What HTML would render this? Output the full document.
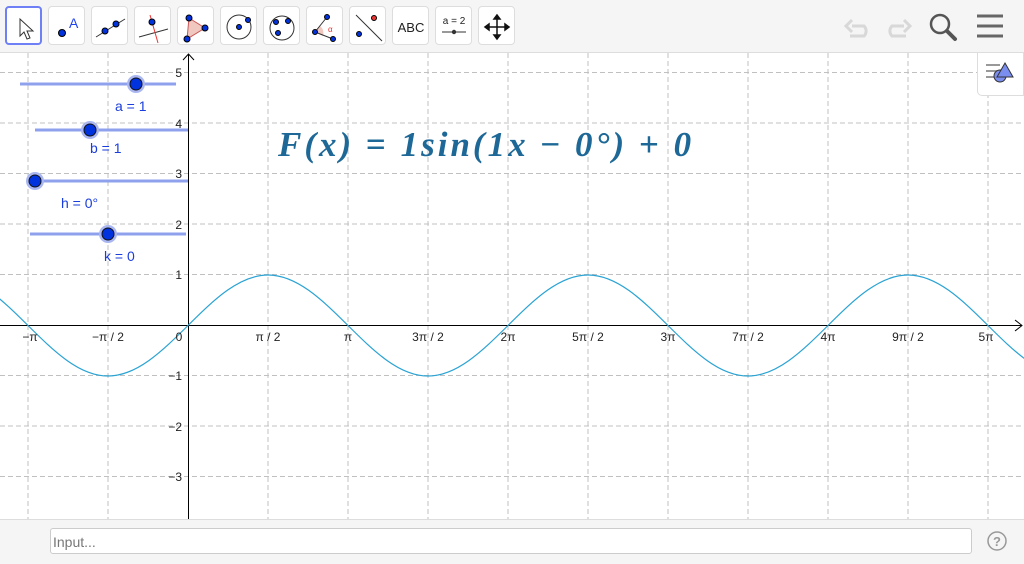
<!DOCTYPE html>
<html><head><meta charset="utf-8"><style>
*{margin:0;padding:0;box-sizing:border-box}
body{width:1024px;height:564px;overflow:hidden;background:#fff;font-family:"Liberation Sans",sans-serif;position:relative}
#tb{position:absolute;left:0;top:0;width:1024px;height:53px;background:#f5f5f5;border-bottom:1px solid #ddd}
.btn{position:absolute;top:6px;width:37px;height:39px;background:#fff;border:1px solid #ddd;border-radius:4px}
.btn svg{position:absolute;left:0;top:0}
#bot{position:absolute;left:0;top:519px;width:1024px;height:45px;background:#f5f5f5;border-top:1px solid #ddd}
#inp{position:absolute;left:50px;top:8px;width:922px;height:26px;background:#fff;border:1px solid #ccc;border-radius:3px;font-size:14px;color:#777;padding:5px 2px}
.lbl{position:absolute;font-size:14px;color:#1a3ddd}
#f{position:absolute;left:278px;top:125px;font-family:"Liberation Serif",serif;font-weight:bold;font-style:italic;font-size:35px;letter-spacing:3px;color:#1d6896;white-space:nowrap}
#f span{font-style:normal}
</style></head><body>
<svg width="1024" height="564" style="position:absolute;left:0;top:0">
<g stroke="#c0c0c0" stroke-dasharray="5,3" stroke-width="1">
<line x1="28" y1="53" x2="28" y2="519"/><line x1="108" y1="53" x2="108" y2="519"/><line x1="268" y1="53" x2="268" y2="519"/><line x1="348" y1="53" x2="348" y2="519"/><line x1="428" y1="53" x2="428" y2="519"/><line x1="508" y1="53" x2="508" y2="519"/><line x1="588" y1="53" x2="588" y2="519"/><line x1="668" y1="53" x2="668" y2="519"/><line x1="748" y1="53" x2="748" y2="519"/><line x1="828" y1="53" x2="828" y2="519"/><line x1="908" y1="53" x2="908" y2="519"/><line x1="988" y1="53" x2="988" y2="519"/>
<line x1="0" y1="72.5" x2="1024" y2="72.5"/><line x1="0" y1="123" x2="1024" y2="123"/><line x1="0" y1="173.5" x2="1024" y2="173.5"/><line x1="0" y1="224" x2="1024" y2="224"/><line x1="0" y1="274.5" x2="1024" y2="274.5"/><line x1="0" y1="375.5" x2="1024" y2="375.5"/><line x1="0" y1="426" x2="1024" y2="426"/><line x1="0" y1="476.5" x2="1024" y2="476.5"/>
</g>
<g stroke="#000" stroke-width="1" fill="none">
<line x1="0" y1="325.5" x2="1022" y2="325.5"/><polyline points="1015,320 1022,325.5 1015,331"/>
<line x1="188.5" y1="519" x2="188.5" y2="54"/><polyline points="183,60 188.5,54 194,60"/>
</g>
<defs><path id="p" d="M0 0 C26.08 -25.87 51.26 -50.5 80 -50.5 S133.92 -25.87 160 0 S211.26 50.5 240 50.5 S293.92 25.87 320 0"/></defs>
<g fill="none" stroke="#2aa3d3" stroke-width="1.2">
<use href="#p" transform="translate(-132,325.5)"/>
<use href="#p" transform="translate(188,325.5)"/>
<use href="#p" transform="translate(508,325.5)"/>
<use href="#p" transform="translate(828,325.5)"/>
</g>
<g font-size="12" fill="#222" text-anchor="middle" font-family="Liberation Sans">
<text x="30" y="341">−π</text><text x="108" y="341">−π / 2</text><text x="179" y="341">0</text><text x="268" y="341">π / 2</text><text x="348" y="341">π</text><text x="428" y="341">3π / 2</text><text x="508" y="341">2π</text><text x="588" y="341">5π / 2</text><text x="668" y="341">3π</text><text x="748" y="341">7π / 2</text><text x="828" y="341">4π</text><text x="908" y="341">9π / 2</text><text x="986" y="341">5π</text>
<g text-anchor="end"><text x="182" y="77">5</text><text x="182" y="128">4</text><text x="182" y="178">3</text><text x="182" y="229">2</text><text x="182" y="279">1</text><text x="182" y="380">−1</text><text x="182" y="431">−2</text><text x="182" y="481">−3</text></g>
</g>
<g stroke="#8fa0ec" stroke-width="3">
<line x1="20" y1="84" x2="176" y2="84"/><line x1="35" y1="130" x2="188" y2="130"/><line x1="30" y1="181" x2="188" y2="181"/><line x1="30" y1="234" x2="186" y2="234"/>
</g>
<g fill="#0033dd" stroke="#111" stroke-width="1">
<circle cx="136" cy="84" r="9" fill="#a9b6f2" stroke="none"/><circle cx="136" cy="84" r="6"/>
<circle cx="90" cy="130" r="9" fill="#a9b6f2" stroke="none"/><circle cx="90" cy="130" r="6"/>
<circle cx="35" cy="181" r="9" fill="#a9b6f2" stroke="none"/><circle cx="35" cy="181" r="6"/>
<circle cx="108" cy="234" r="9" fill="#a9b6f2" stroke="none"/><circle cx="108" cy="234" r="6"/>
</g>
</svg>
<div class="lbl" style="left:115px;top:98px">a = 1</div>
<div class="lbl" style="left:90px;top:140px">b = 1</div>
<div class="lbl" style="left:61px;top:195px">h = 0°</div>
<div class="lbl" style="left:104px;top:248px">k = 0</div>
<div id="f">F(x) <span>=</span> 1sin(1x <span>−</span> 0°) <span>+</span> 0</div>
<div style="position:absolute;left:977px;top:53px;width:47px;height:43px;background:#fff;border:1px solid #ddd;border-top:none;border-radius:0 0 0 5px">
<svg width="47" height="43"><g stroke="#999" stroke-width="2"><line x1="8" y1="12" x2="22" y2="12"/><line x1="8" y1="18" x2="20" y2="18"/><line x1="8" y1="24" x2="16" y2="24"/></g><circle cx="22" cy="23" r="6" fill="#7a8ef0" stroke="#333"/><polygon points="27,10 35,24 19,24" fill="#7a8ef0" stroke="#333"/></svg></div>
<div id="tb">
<div class="btn" style="left:5px;border:2px solid #6f7ff5"><svg width="37" height="39"><path d="M13 11 L13 28 L17 24 L20 31 L23 30 L20 23 L26 23 Z" fill="#fff" stroke="#333"/></svg></div>
<div class="btn" style="left:48px"><svg width="37" height="39"><circle cx="13" cy="26" r="3.5" fill="#0033dd" stroke="#000"/><text x="20" y="21" font-size="14" fill="#2244ee" font-family="Liberation Sans">A</text></svg></div>
<div class="btn" style="left:91px"><svg width="37" height="39"><line x1="4" y1="30" x2="33" y2="12" stroke="#333"/><circle cx="13" cy="24" r="3" fill="#0033dd" stroke="#000"/><circle cx="24" cy="17" r="3" fill="#0033dd" stroke="#000"/></svg></div>
<div class="btn" style="left:134px"><svg width="37" height="39"><line x1="4" y1="30" x2="33" y2="22" stroke="#333"/><line x1="15" y1="8" x2="23" y2="36" stroke="#e33"/><circle cx="17" cy="15" r="3" fill="#0033dd" stroke="#000"/></svg></div>
<div class="btn" style="left:177px"><svg width="37" height="39"><polygon points="11,11 27,21 9,32" fill="#f0c8c0" stroke="#c55"/><circle cx="11" cy="11" r="3" fill="#0033dd" stroke="#000"/><circle cx="27" cy="21" r="3" fill="#0033dd" stroke="#000"/><circle cx="9" cy="32" r="3" fill="#0033dd" stroke="#000"/></svg></div>
<div class="btn" style="left:220px"><svg width="37" height="39"><circle cx="18" cy="20" r="12" fill="none" stroke="#333"/><circle cx="18" cy="20" r="2.5" fill="#0033dd" stroke="#000"/><circle cx="27" cy="13" r="2.5" fill="#0033dd" stroke="#000"/></svg></div>
<div class="btn" style="left:263px"><svg width="37" height="39"><ellipse cx="18" cy="21" rx="12" ry="12" fill="none" stroke="#333"/><circle cx="12" cy="15" r="2.5" fill="#0033dd" stroke="#000"/><circle cx="24" cy="14" r="2.5" fill="#0033dd" stroke="#000"/><circle cx="14" cy="26" r="2.5" fill="#0033dd" stroke="#000"/></svg></div>
<div class="btn" style="left:306px"><svg width="37" height="39"><path d="M8 25 L16 29 A9 9 0 0 0 13 19 Z" fill="#f0c8c0"/><polyline points="20,10 8,25 26,32" fill="none" stroke="#333"/><text x="21" y="25" font-size="8" fill="#e33">α</text><circle cx="20" cy="10" r="2.5" fill="#0033dd" stroke="#000"/><circle cx="8" cy="25" r="2.5" fill="#0033dd" stroke="#000"/><circle cx="26" cy="32" r="2.5" fill="#0033dd" stroke="#000"/></svg></div>
<div class="btn" style="left:349px"><svg width="37" height="39"><line x1="6" y1="8" x2="32" y2="34" stroke="#333"/><circle cx="24" cy="11" r="2.5" fill="#e33" stroke="#000"/><circle cx="9" cy="27" r="2.5" fill="#0033dd" stroke="#000"/></svg></div>
<div class="btn" style="left:392px"><svg width="37" height="39"><text x="18" y="25" font-size="13" text-anchor="middle" fill="#222" font-family="Liberation Sans">ABC</text></svg></div>
<div class="btn" style="left:435px"><svg width="37" height="39"><text x="18" y="17" font-size="10" text-anchor="middle" fill="#222" font-family="Liberation Sans">a = 2</text><line x1="6" y1="25" x2="30" y2="25" stroke="#333"/><circle cx="18" cy="25" r="2.2" fill="#333"/></svg></div>
<div class="btn" style="left:478px"><svg width="37" height="39"><g stroke="#111" stroke-width="1.5" fill="#111"><line x1="18" y1="9" x2="18" y2="31"/><line x1="7" y1="20" x2="29" y2="20"/><polygon points="18,8 15,12 21,12"/><polygon points="18,32 15,28 21,28"/><polygon points="6,20 10,17 10,23"/><polygon points="30,20 26,17 26,23"/></g></svg></div>
<svg width="194" height="53" style="position:absolute;left:830px;top:0"><g fill="none" stroke="#d8d8d8" stroke-width="3"><path d="M22 26 H34 A7 7 0 0 1 34 36 H20"/><polyline points="22,20 16,26 22,32"/><path d="M74 26 H62 A7 7 0 0 0 62 36 H76"/><polyline points="74,20 80,26 74,32"/></g><circle cx="110" cy="24" r="9" fill="none" stroke="#555" stroke-width="2.5"/><line x1="117" y1="31" x2="125" y2="39" stroke="#555" stroke-width="4" stroke-linecap="round"/><g stroke="#666" stroke-width="3"><line x1="147" y1="16" x2="173" y2="16"/><line x1="147" y1="26" x2="173" y2="26"/><line x1="147" y1="36" x2="173" y2="36"/></g></svg>
</div>
<div id="bot"><div id="inp">Input...</div>
<svg width="24" height="24" style="position:absolute;left:986px;top:10px"><circle cx="11" cy="11" r="9" fill="none" stroke="#999" stroke-width="1.5"/><text x="11" y="16" font-size="13" text-anchor="middle" fill="#999" font-weight="bold" font-family="Liberation Sans">?</text></svg></div>
</body></html>
